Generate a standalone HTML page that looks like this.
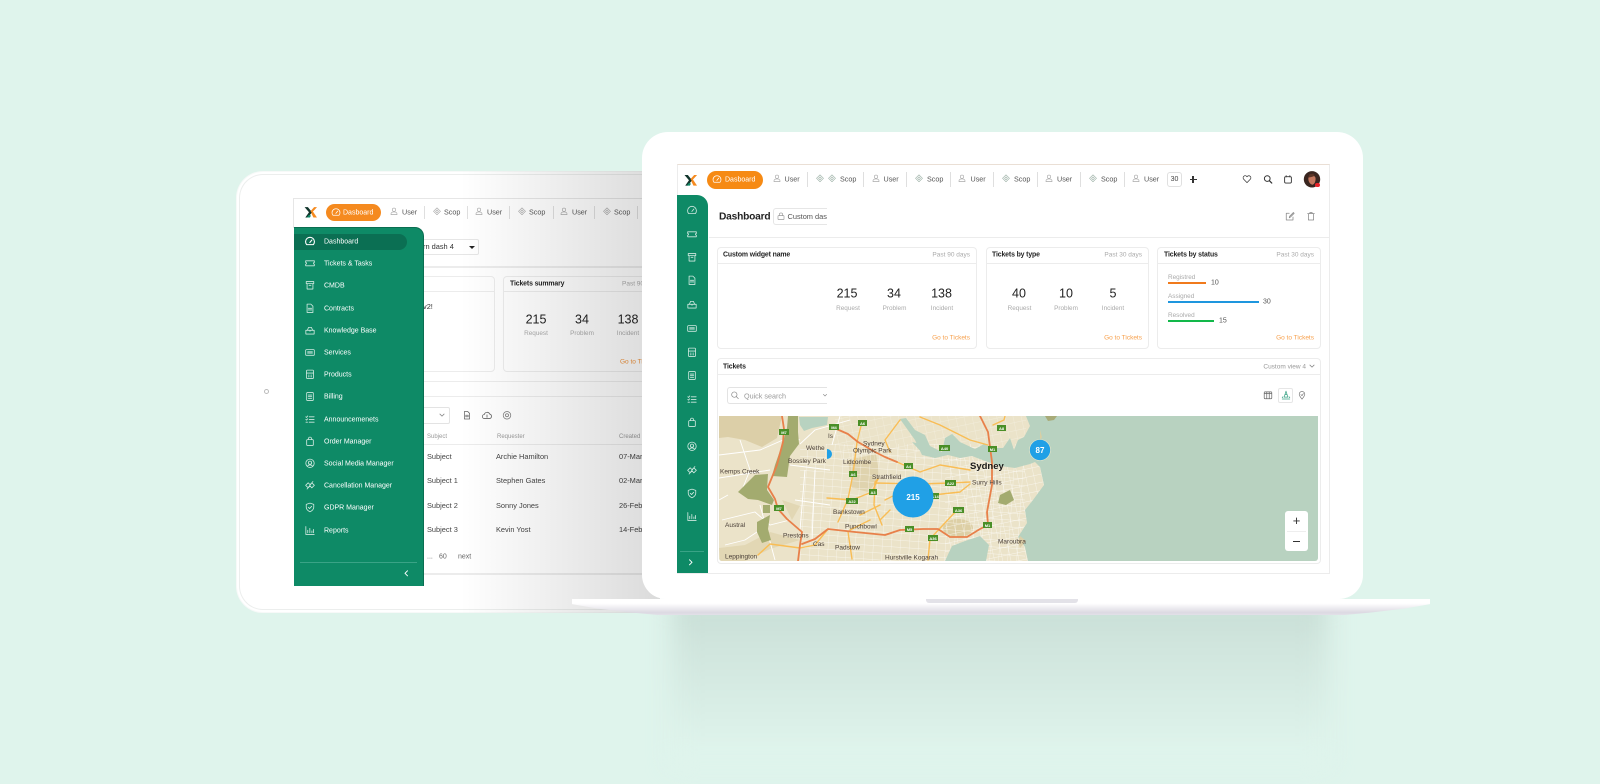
<!DOCTYPE html>
<html><head><meta charset="utf-8"><title>Dashboard</title>
<style>
html,body{margin:0;padding:0}
body{width:1600px;height:784px;position:relative;overflow:hidden;background:#dff4ec;font-family:"Liberation Sans",sans-serif;color:#444}
#w{position:absolute;left:0;top:0;width:1600px;height:784px;filter:blur(.3px)}
.a{position:absolute;box-sizing:border-box}
.t{position:absolute;white-space:nowrap;transform:translateY(calc(-50% + .6px));font-size:7.2px;line-height:1.2;color:#555}
.c{position:absolute;white-space:nowrap;transform:translate(-50%,-50%);line-height:1.2}
.r{position:absolute;white-space:nowrap;transform:translate(-100%,calc(-50% + .6px));line-height:1.2}
.i{position:absolute;fill:none;stroke:currentColor;stroke-width:1;stroke-linecap:round;stroke-linejoin:round;transform:translate(-50%,calc(-50% - .7px));overflow:visible}
.sep{position:absolute;width:1px;background:#dfdfdf}
.card{position:absolute;box-sizing:border-box;border:1px solid #ececec;border-radius:4px;background:#fff}
.ln{position:absolute;height:1px;background:#ececec}
.num{font-size:12.5px;color:#222}
.lab{font-size:6.4px;color:#aaa;margin-top:.7px}
.ttl{font-size:6.9px;color:#222;font-weight:bold;letter-spacing:-.12px}
.past{font-size:6.5px;color:#aaa}
.go{font-size:6.5px;color:#f7a04c}
.side{font-size:7px;color:#fff}
.row{font-size:7.4px;color:#444}
.th{font-size:6px;color:#999}
svg text{font-family:"Liberation Sans",sans-serif}
</style></head>
<body>
<svg width="0" height="0" style="position:absolute">
<symbol id="user" viewBox="0 0 12 12"><circle cx="6" cy="3.6" r="2.5"/><path d="M1.5 11v-1.2c0-2 2-2.9 4.5-2.9s4.5.9 4.5 2.900V11z"/></symbol>
<symbol id="scop" viewBox="0 0 12 12"><path d="M6 .8 11.200 6 6 11.200 .8 6z"/><path d="M6 3.800 8.200 6 6 8.200 3.800 6z"/></symbol>
<symbol id="gauge" viewBox="0 0 12 12"><path d="M2 10a5.300 5.300 0 1 1 8 0z"/><path d="M5.800 7.400 8.300 4.400"/></symbol>
<symbol id="ticket" viewBox="0 0 12 12"><path d="M.8 3h10.400v2a1 1 0 0 0 0 2v2H.8V7a1 1 0 0 0 0-2z"/></symbol>
<symbol id="box" viewBox="0 0 12 12"><path d="M1.500 1.500h9v2.500h-9zM2.500 4v6.500h7V4M4.800 6h2.400"/></symbol>
<symbol id="doc" viewBox="0 0 12 12"><path d="M2.500 1h4.500l2.500 2.500V11h-7zM4 6h4M4 8h4"/></symbol>
<symbol id="kb" viewBox="0 0 12 12"><path d="M1 6h10v4.500H1zM2.800 6 4.300 2.500h3.400L9.200 6M6 6v1.300"/></symbol>
<symbol id="serv" viewBox="0 0 12 12"><rect x=".8" y="2.800" width="10.400" height="6.800" rx="1"/><path d="M3 6.200h6M3 4.800h6M3 7.600h6" stroke-width=".7"/></symbol>
<symbol id="prod" viewBox="0 0 12 12"><rect x="1.800" y="1" width="8.400" height="10" rx="1"/><path d="M1.800 4.500h8.400M4 7h1M7 7h1M4 9h1M7 9h1"/></symbol>
<symbol id="bill" viewBox="0 0 12 12"><rect x="2" y="1.500" width="8" height="9.500" rx=".8"/><path d="M4 4.500h4M4 6.500h4M4 8.500h4"/></symbol>
<symbol id="ann" viewBox="0 0 12 12"><path d="M1 3l.8.800L3.200 2M5 3h6M1 6.200l.8.800 1.400-1.600M5 6.300h6M1.200 9.500h1.800M5 9.500h6"/></symbol>
<symbol id="bag" viewBox="0 0 12 12"><rect x="2" y="4" width="8" height="7" rx="1"/><path d="M4 4V3a2 2 0 0 1 4 0v1"/></symbol>
<symbol id="soc" viewBox="0 0 12 12"><circle cx="6" cy="6" r="5"/><circle cx="6" cy="5.300" r="1.900"/><path d="M3 9.500c1-2 5-2 6 0"/></symbol>
<symbol id="canc" viewBox="0 0 12 12"><path d="M.8 6 3.800 3 6 5.200 8.200 3l3 3-3 3L6 6.800 3.800 9zM2.500 10.500l7-9"/></symbol>
<symbol id="gdpr" viewBox="0 0 12 12"><path d="M6 1l4.500 1.500V6c0 3-2.500 4.500-4.500 5.500C4 10.500 1.500 9 1.500 6V2.500z"/><path d="M4 6l1.500 1.500L8 4.800"/></symbol>
<symbol id="rep" viewBox="0 0 12 12"><path d="M1 1.500V11h10M3.300 9V6M5.800 9V3.800M8.300 9V6.800M10.300 9V5"/></symbol>
<symbol id="logo" viewBox="0 0 14 12"><path d="M0 .3h3.600L8.200 6 3.600 11.700H.8L4.800 6z" fill="#12352c" stroke="none"/><path d="M13.600.3h-3.200L6.400 4.800 8 6.400z" fill="#f58a1f" stroke="none"/><path d="M7.200 6.800 9.600 11.700h3.900L9 5z" fill="#f58a1f" stroke="none"/><path d="M4.500 9 2.400 11.700h3.400L7 9.500z" fill="#0e8a66" stroke="none"/></symbol>
</svg>
<div id="w">

<!-- TABLET -->
<div class="a" style="left:236px;top:171px;width:440px;height:442px;border-radius:27px 0 0 27px;background:#fff;border:1px solid #f7f9f8;border-right:0"></div>
<div class="a" style="left:239px;top:174px;width:437px;height:436px;border-radius:24px 0 0 24px;border:1px solid #eceeed;border-right:0"></div>
<div class="a" style="left:266px;top:391px;width:5px;height:5px;margin:-2.500px;border-radius:50%;border:1px solid #bbb"></div>
<div class="a" style="left:293px;top:198px;width:360px;height:1px;background:#e6e6e6"></div>
<div class="a" style="left:293px;top:198px;width:1px;height:30px;background:#e6e6e6"></div>

<svg class="i" style="left:311px;top:213px;color:#000" width="13" height="11"><use href="#logo"/></svg>
<div class="a" style="left:326px;top:204px;width:55px;height:17px;border-radius:9px;background:#f58a1f"></div>
<svg class="i" style="left:336px;top:212.500px;color:#fff" width="9" height="9"><use href="#gauge"/></svg>
<div class="t" style="left:343px;top:212.500px;color:#fff;font-size:7px">Dasboard</div>

<svg class="i" style="left:394px;top:212px;color:#aaa" width="8" height="8"><use href="#user"/></svg><div class="t" style="left:402px;top:212px">User</div>
<div class="sep" style="left:424px;top:206px;height:13px"></div>
<svg class="i" style="left:437px;top:212px;color:#aaa" width="8" height="8"><use href="#scop"/></svg><div class="t" style="left:444px;top:212px">Scop</div>
<div class="sep" style="left:467px;top:206px;height:13px"></div>
<svg class="i" style="left:479px;top:212px;color:#aaa" width="8" height="8"><use href="#user"/></svg><div class="t" style="left:487px;top:212px">User</div>
<div class="sep" style="left:509px;top:206px;height:13px"></div>
<svg class="i" style="left:522px;top:212px;color:#aaa" width="8" height="8"><use href="#scop"/></svg><div class="t" style="left:529px;top:212px">Scop</div>
<div class="sep" style="left:553px;top:206px;height:13px"></div>
<svg class="i" style="left:564px;top:212px;color:#aaa" width="8" height="8"><use href="#user"/></svg><div class="t" style="left:572px;top:212px">User</div>
<div class="sep" style="left:594px;top:206px;height:13px"></div>
<svg class="i" style="left:607px;top:212px;color:#aaa" width="8" height="8"><use href="#scop"/></svg><div class="t" style="left:614px;top:212px">Scop</div>
<div class="sep" style="left:637px;top:206px;height:13px"></div>

<div class="a" style="left:420px;top:239px;width:59px;height:16px;border:1px solid #e6e6e6;border-radius:2px"></div>
<div class="t" style="left:423px;top:247px;color:#333;font-size:7.400px">rn dash 4</div>
<div class="a" style="left:469px;top:246px;border-left:3px solid transparent;border-right:3px solid transparent;border-top:3.500px solid #222"></div>
<div class="ln" style="left:420px;top:266px;width:240px;height:2px"></div>

<div class="card" style="left:400px;top:276px;width:95px;height:96px"></div>
<div class="ln" style="left:400px;top:291px;width:95px"></div>
<div class="t" style="left:423px;top:307px;color:#333;font-size:7.400px">v2!</div>
<div class="card" style="left:503px;top:276px;width:170px;height:96px;background:#fff"></div>
<div class="ln" style="left:503px;top:291px;width:170px"></div>
<div class="t ttl" style="left:510px;top:283.500px">Tickets summary</div>
<div class="t past" style="left:622px;top:283.500px">Past 90 days</div>
<div class="c num" style="left:536px;top:320px">215</div><div class="c num" style="left:582px;top:320px">34</div><div class="c num" style="left:628px;top:320px">138</div>
<div class="c lab" style="left:536px;top:333px">Request</div><div class="c lab" style="left:582px;top:333px">Problem</div><div class="c lab" style="left:628px;top:333px">Incident</div>
<div class="t go" style="left:620px;top:362px;color:#f0923a">Go to Tickets</div>
<div class="ln" style="left:420px;top:381px;width:240px"></div>
<div class="ln" style="left:420px;top:396px;width:240px"></div>

<div class="a" style="left:400px;top:407px;width:50px;height:17px;border:1px solid #e3e3e3;border-radius:2px"></div>
<svg class="i" style="left:442px;top:416px;color:#888" width="5" height="4" viewBox="0 0 6 4"><path d="M.5.500 3 3 5.500.500"/></svg>
<svg class="i" style="left:467px;top:416px;color:#666" width="9" height="9"><use href="#doc"/></svg>
<svg class="i" style="left:487px;top:416px;color:#666" width="10" height="9" viewBox="0 0 12 11"><path d="M3 9.500a2.500 2.500 0 0 1-.3-5A3.500 3.500 0 0 1 9.300 4a2.800 2.800 0 0 1-.3 5.500zM6 5v3"/></svg>
<svg class="i" style="left:507px;top:416px;color:#777" width="9" height="9" viewBox="0 0 12 12"><circle cx="6" cy="6" r="5" stroke-dasharray="2 .6"/><circle cx="6" cy="6" r="2"/></svg>

<div class="t th" style="left:427px;top:437px">Subject</div><div class="t th" style="left:497px;top:437px">Requester</div><div class="t th" style="left:619px;top:437px">Created date</div>
<div class="ln" style="left:420px;top:444px;width:240px"></div>
<div class="t row" style="left:427px;top:457px">Subject</div><div class="t row" style="left:496px;top:457px">Archie Hamilton</div><div class="t row" style="left:619px;top:457px">07-Mar-2021</div>
<div class="t row" style="left:427px;top:481px">Subject 1</div><div class="t row" style="left:496px;top:481px">Stephen Gates</div><div class="t row" style="left:619px;top:481px">02-Mar-2021</div>
<div class="t row" style="left:427px;top:505.500px">Subject 2</div><div class="t row" style="left:496px;top:505.500px">Sonny Jones</div><div class="t row" style="left:619px;top:505.500px">26-Feb-2021</div>
<div class="t row" style="left:427px;top:529.500px">Subject 3</div><div class="t row" style="left:496px;top:529.500px">Kevin Yost</div><div class="t row" style="left:619px;top:529.500px">14-Feb-2021</div>
<div class="t th" style="left:427px;top:557px;font-size:7px;color:#666">...</div><div class="t th" style="left:439px;top:557px;font-size:7px;color:#666">60</div><div class="t th" style="left:458px;top:557px;font-size:7px;color:#666">next</div>
<div class="ln" style="left:420px;top:573px;width:240px;height:2px"></div>

<!-- tablet gray fade -->
<div class="a" style="left:460px;top:171px;width:200px;height:442px;background:linear-gradient(90deg,rgba(0,0,0,0) 0,rgba(0,0,0,.12) 85%,rgba(0,0,0,.14) 100%)"></div>

<!-- sidebar -->
<div class="a" style="left:294px;top:227px;width:130px;height:359px;background:#0e8a66;border-radius:0 9px 0 0;border-right:1px solid #0a6e51;border-top:1px solid #0a6e51"></div>
<div class="a" style="left:294px;top:234px;width:113px;height:16px;background:#0b6f53;border-radius:0 8px 8px 0"></div>
<svg class="i" style="left:310px;top:242px;color:#fff;stroke-width:1.300" width="10" height="10"><use href="#gauge"/></svg><div class="t side" style="left:324px;top:242px">Dashboard</div>
<svg class="i" style="left:310px;top:264px;color:#cfe8df" width="10" height="10"><use href="#ticket"/></svg><div class="t side" style="left:324px;top:264px">Tickets &amp; Tasks</div>
<svg class="i" style="left:310px;top:286px;color:#cfe8df" width="10" height="10"><use href="#box"/></svg><div class="t side" style="left:324px;top:286px">CMDB</div>
<svg class="i" style="left:310px;top:308.500px;color:#cfe8df" width="10" height="10"><use href="#doc"/></svg><div class="t side" style="left:324px;top:308.500px">Contracts</div>
<svg class="i" style="left:310px;top:330.700px;color:#cfe8df" width="10" height="10"><use href="#kb"/></svg><div class="t side" style="left:324px;top:330.700px">Knowledge Base</div>
<svg class="i" style="left:310px;top:353px;color:#cfe8df" width="10" height="10"><use href="#serv"/></svg><div class="t side" style="left:324px;top:353px">Services</div>
<svg class="i" style="left:310px;top:375px;color:#cfe8df" width="10" height="10"><use href="#prod"/></svg><div class="t side" style="left:324px;top:375px">Products</div>
<svg class="i" style="left:310px;top:397px;color:#cfe8df" width="10" height="10"><use href="#bill"/></svg><div class="t side" style="left:324px;top:397px">Billing</div>
<svg class="i" style="left:310px;top:419.500px;color:#cfe8df" width="10" height="10"><use href="#ann"/></svg><div class="t side" style="left:324px;top:419.500px">Announcemenets</div>
<svg class="i" style="left:310px;top:442px;color:#cfe8df" width="10" height="10"><use href="#bag"/></svg><div class="t side" style="left:324px;top:442px">Order Manager</div>
<svg class="i" style="left:310px;top:464px;color:#cfe8df" width="10" height="10"><use href="#soc"/></svg><div class="t side" style="left:324px;top:464px">Social Media Manager</div>
<svg class="i" style="left:310px;top:486px;color:#cfe8df" width="10" height="10"><use href="#canc"/></svg><div class="t side" style="left:324px;top:486px">Cancellation Manager</div>
<svg class="i" style="left:310px;top:508px;color:#cfe8df" width="10" height="10"><use href="#gdpr"/></svg><div class="t side" style="left:324px;top:508px">GDPR Manager</div>
<svg class="i" style="left:310px;top:530.700px;color:#cfe8df" width="10" height="10"><use href="#rep"/></svg><div class="t side" style="left:324px;top:530.700px">Reports</div>
<div class="a" style="left:300px;top:561.500px;width:117px;height:1px;background:#3aa386"></div>
<svg class="i" style="left:406px;top:574px;color:#fff" width="4" height="6" viewBox="0 0 4 6"><path d="M3.500.500 1 3l2.500 2.500"/></svg>

<!-- LAPTOP shadow & base -->
<div class="a" style="left:672px;top:600px;width:656px;height:165px;background:linear-gradient(#c2d9d0 0,#cde2da 15%,#dff4ec 92%);filter:blur(12px)"></div>
<div class="a" style="left:572px;top:599px;width:858px;height:16px;background:linear-gradient(#fff 0,#fff 28%,#f4f3f6 45%,#dcd9e2 85%,#e2e0e8 100%);clip-path:polygon(0 0,100% 0,100% 32%,97% 60%,93% 85%,90% 100%,10% 100%,7% 85%,3% 60%,0 32%)"></div>
<div class="a" style="left:642px;top:132px;width:721px;height:467px;background:#fff;border-radius:26px 26px 24px 24px"></div>
<div class="a" style="left:926px;top:599px;width:152px;height:4px;background:#e3e2e8;border-radius:0 0 3px 3px"></div>

<!-- Laptop screen -->
<div class="a" style="left:677px;top:164px;width:653px;height:410px;border:1px solid #ececec;border-top-color:#eadfd5;background:#fff"></div>

<svg class="i" style="left:691px;top:180.500px" width="13" height="11.500"><use href="#logo"/></svg>
<div class="a" style="left:707px;top:171px;width:56px;height:18px;border-radius:9px;background:#f68a14"></div>
<svg class="i" style="left:717px;top:180px;color:#fff" width="9" height="9"><use href="#gauge"/></svg>
<div class="t" style="left:725px;top:180px;color:#fff;font-size:7px">Dasboard</div>

<svg class="i" style="left:777px;top:179px;color:#aaa" width="8" height="8"><use href="#user"/></svg><div class="t" style="left:784.500px;top:179px">User</div>
<div class="sep" style="left:807px;top:172px;height:15px"></div>
<svg class="i" style="left:820px;top:179px;color:#9fb3a9" width="8" height="8"><use href="#scop"/></svg><svg class="i" style="left:832px;top:179px;color:#9fb3a9" width="8" height="8"><use href="#scop"/></svg><div class="t" style="left:840px;top:179px">Scop</div>
<div class="sep" style="left:863px;top:172px;height:15px"></div>
<svg class="i" style="left:876px;top:179px;color:#aaa" width="8" height="8"><use href="#user"/></svg><div class="t" style="left:883.500px;top:179px">User</div>
<div class="sep" style="left:906px;top:172px;height:15px"></div>
<svg class="i" style="left:919px;top:179px;color:#9fb3a9" width="8" height="8"><use href="#scop"/></svg><div class="t" style="left:927px;top:179px">Scop</div>
<div class="sep" style="left:950px;top:172px;height:15px"></div>
<svg class="i" style="left:962px;top:179px;color:#aaa" width="8" height="8"><use href="#user"/></svg><div class="t" style="left:970.500px;top:179px">User</div>
<div class="sep" style="left:993px;top:172px;height:15px"></div>
<svg class="i" style="left:1006px;top:179px;color:#9fb3a9" width="8" height="8"><use href="#scop"/></svg><div class="t" style="left:1014px;top:179px">Scop</div>
<div class="sep" style="left:1037px;top:172px;height:15px"></div>
<svg class="i" style="left:1049px;top:179px;color:#aaa" width="8" height="8"><use href="#user"/></svg><div class="t" style="left:1057px;top:179px">User</div>
<div class="sep" style="left:1080px;top:172px;height:15px"></div>
<svg class="i" style="left:1093px;top:179px;color:#9fb3a9" width="8" height="8"><use href="#scop"/></svg><div class="t" style="left:1101px;top:179px">Scop</div>
<div class="sep" style="left:1124px;top:172px;height:15px"></div>
<svg class="i" style="left:1136px;top:179px;color:#aaa" width="8" height="8"><use href="#user"/></svg><div class="t" style="left:1144px;top:179px">User</div>
<div class="a" style="left:1167px;top:172px;width:15px;height:15px;border:1px solid #e0e0e0;border-radius:3px"></div>
<div class="c" style="left:1174.500px;top:179.500px;font-size:7px;color:#444">30</div>
<div class="a" style="left:1189.500px;top:178.500px;width:7px;height:1.300px;background:#333"></div><div class="a" style="left:1192.400px;top:175.600px;width:1.300px;height:7px;background:#333"></div>
<svg class="i" style="left:1247px;top:179.500px;color:#333" width="9" height="8" viewBox="0 0 12 11"><path d="M6 10 1.500 5.500a2.800 2.800 0 0 1 4-4L6 2l.5-.5a2.800 2.800 0 0 1 4 4z"/></svg>
<svg class="i" style="left:1267.500px;top:179.500px;color:#333" width="9" height="9" viewBox="0 0 12 12"><circle cx="5" cy="5" r="3.800" stroke-width="1.300"/><path d="M8 8l3 3" stroke-width="1.600"/></svg>
<svg class="i" style="left:1288px;top:179.500px;color:#333" width="9" height="9" viewBox="0 0 12 12"><rect x="1.500" y="2.500" width="9" height="8.500" rx="1.500" stroke-width="1.200"/><path d="M3.500 1v2M8.500 1v2"/></svg>
<svg class="i" style="left:1312px;top:179.500px" width="17" height="17" viewBox="0 0 17 17"><circle cx="8.500" cy="8.500" r="8.200" fill="#3a2620" stroke="none"/><path d="M5 6.500c1-2.500 6-2.800 7 .5.400 3-.8 6.500-3 7-2.300-.2-4.800-3.500-4-7.500z" fill="#c5785f" stroke="none"/><path d="M4.500 7c1.500-.5 5-.8 6.500-2L10 3 6 3.500z" fill="#5a3426" stroke="none"/></svg>
<div class="a" style="left:1315px;top:182.500px;width:4.500px;height:4.500px;border-radius:50%;background:#e8232a"></div>

<!-- Rail -->
<div class="a" style="left:677px;top:195px;width:31px;height:378px;background:#0e8a66;border-radius:0 11px 0 0"></div>
<svg class="i" style="left:691.500px;top:211px;color:#cfe8df" width="10" height="10"><use href="#gauge"/></svg>
<svg class="i" style="left:691.500px;top:235px;color:#cfe8df" width="10" height="10"><use href="#ticket"/></svg>
<svg class="i" style="left:691.500px;top:258px;color:#cfe8df" width="10" height="10"><use href="#box"/></svg>
<svg class="i" style="left:691.500px;top:281px;color:#cfe8df" width="10" height="10"><use href="#doc"/></svg>
<svg class="i" style="left:691.500px;top:305px;color:#cfe8df" width="10" height="10"><use href="#kb"/></svg>
<svg class="i" style="left:691.500px;top:329px;color:#cfe8df" width="10" height="10"><use href="#serv"/></svg>
<svg class="i" style="left:691.500px;top:352.500px;color:#cfe8df" width="10" height="10"><use href="#prod"/></svg>
<svg class="i" style="left:691.500px;top:376px;color:#cfe8df" width="10" height="10"><use href="#bill"/></svg>
<svg class="i" style="left:691.500px;top:400px;color:#cfe8df" width="10" height="10"><use href="#ann"/></svg>
<svg class="i" style="left:691.500px;top:423px;color:#cfe8df" width="10" height="10"><use href="#bag"/></svg>
<svg class="i" style="left:691.500px;top:447px;color:#cfe8df" width="10" height="10"><use href="#soc"/></svg>
<svg class="i" style="left:691.500px;top:470.500px;color:#cfe8df" width="10" height="10"><use href="#canc"/></svg>
<svg class="i" style="left:691.500px;top:494px;color:#cfe8df" width="10" height="10"><use href="#gdpr"/></svg>
<svg class="i" style="left:691.500px;top:517px;color:#cfe8df" width="10" height="10"><use href="#rep"/></svg>
<div class="a" style="left:680px;top:550.500px;width:24px;height:1px;background:#3aa386"></div>
<svg class="i" style="left:691px;top:563px;color:#fff" width="4" height="6" viewBox="0 0 4 6"><path d="M.5.500 3 3 .5 5.500"/></svg>

<!-- Header -->
<div class="t" style="left:719px;top:217px;font-size:10.200px;font-weight:bold;color:#222;letter-spacing:-.2px">Dashboard</div>
<div class="a" style="left:773px;top:208px;width:54px;height:17px;border:1px solid #e6e6e6;border-right:0;border-radius:3px 0 0 3px;overflow:hidden;background:#fff">
<div class="t" style="left:13.500px;top:7.500px;font-size:7.400px;color:#555">Custom dashboard</div></div>
<svg class="i" style="left:780.500px;top:216.500px;color:#999" width="8" height="8" viewBox="0 0 12 12"><rect x="1.500" y="5" width="9" height="6" rx="1"/><path d="M3.500 5V3.500a2.500 2.500 0 0 1 5 0V5"/></svg>
<svg class="i" style="left:1290px;top:216.500px;color:#888" width="9" height="9" viewBox="0 0 12 12"><path d="M10 7v4H1V2h4M5 8l.5-2L10.500 1l1 1-5 5z"/></svg>
<svg class="i" style="left:1311px;top:216.500px;color:#888" width="8" height="9" viewBox="0 0 10 12"><path d="M1.500 2.500V11h7V2.500zM.5 2.500h9M3.500 2.500V1h3v1.500"/></svg>
<div class="ln" style="left:709px;top:237px;width:620px"></div>

<!-- Card 1 -->
<div class="card" style="left:717px;top:247px;width:260px;height:102px"></div>
<div class="ln" style="left:717px;top:263px;width:260px"></div>
<div class="t ttl" style="left:723px;top:255px">Custom widget name</div>
<div class="r past" style="left:970px;top:255px">Past 90 days</div>
<div class="c num" style="left:847px;top:294px">215</div><div class="c num" style="left:894px;top:294px">34</div><div class="c num" style="left:941.500px;top:294px">138</div>
<div class="c lab" style="left:848px;top:308px">Request</div><div class="c lab" style="left:894.500px;top:308px">Problem</div><div class="c lab" style="left:942px;top:308px">Incident</div>
<div class="r go" style="left:970px;top:338px">Go to Tickets</div>
<!-- Card 2 -->
<div class="card" style="left:986px;top:247px;width:163px;height:102px"></div>
<div class="ln" style="left:986px;top:263px;width:163px"></div>
<div class="t ttl" style="left:992px;top:255px">Tickets by type</div>
<div class="r past" style="left:1142px;top:255px">Past 30 days</div>
<div class="c num" style="left:1019px;top:294px">40</div><div class="c num" style="left:1066px;top:294px">10</div><div class="c num" style="left:1113px;top:294px">5</div>
<div class="c lab" style="left:1019.500px;top:308px">Request</div><div class="c lab" style="left:1066px;top:308px">Problem</div><div class="c lab" style="left:1113px;top:308px">Incident</div>
<div class="r go" style="left:1142px;top:338px">Go to Tickets</div>
<!-- Card 3 -->
<div class="card" style="left:1157px;top:247px;width:164px;height:102px"></div>
<div class="ln" style="left:1157px;top:263px;width:164px"></div>
<div class="t ttl" style="left:1164px;top:255px">Tickets by status</div>
<div class="r past" style="left:1314px;top:255px">Past 30 days</div>
<div class="t lab" style="left:1168px;top:276px">Registred</div>
<div class="a" style="left:1168px;top:282px;width:38px;height:2px;background:#f07a1c"></div><div class="t" style="left:1211px;top:283px;font-size:7px">10</div>
<div class="t lab" style="left:1168px;top:295px">Assigned</div>
<div class="a" style="left:1168px;top:301px;width:91px;height:2px;background:#1e96de"></div><div class="t" style="left:1263px;top:302px;font-size:7px">30</div>
<div class="t lab" style="left:1168px;top:314px">Resolved</div>
<div class="a" style="left:1168px;top:320px;width:46px;height:2px;background:#12b84a"></div><div class="t" style="left:1219px;top:321px;font-size:7px">15</div>
<div class="r go" style="left:1314px;top:338px">Go to Tickets</div>

<!-- Tickets card -->
<div class="card" style="left:717px;top:358px;width:604px;height:206px"></div>
<div class="ln" style="left:717px;top:374px;width:604px"></div>
<div class="t ttl" style="left:723px;top:366.500px">Tickets</div>
<div class="r past" style="left:1306px;top:366.500px;color:#999">Custom view 4</div>
<svg class="i" style="left:1312px;top:367px;color:#888" width="5" height="4" viewBox="0 0 6 4"><path d="M.5.500 3 3 5.500.500"/></svg>
<div class="a" style="left:727px;top:387px;width:100px;height:17px;border:1px solid #e3e3e3;border-right:0;border-radius:3px 0 0 3px;overflow:hidden"></div>
<svg class="i" style="left:735px;top:395.500px;color:#888" width="8" height="8" viewBox="0 0 12 12"><circle cx="5" cy="5" r="4"/><path d="M8 8l3 3"/></svg>
<div class="t" style="left:744px;top:395.500px;color:#999;font-size:7.200px">Quick search</div>
<svg class="i" style="left:825px;top:395.500px;color:#888" width="4" height="3" viewBox="0 0 6 4"><path d="M.5.500 3 3 5.500.500"/></svg>
<svg class="i" style="left:1268px;top:395.500px;color:#666" width="9" height="8" viewBox="0 0 12 11"><rect x=".8" y=".8" width="10.400" height="9.400" rx="1"/><path d="M4.300 1v9M7.700 1v9M1 3h10"/></svg>
<div class="a" style="left:1278px;top:388px;width:15px;height:15px;border:1px solid #e6e6e6;border-radius:2px"></div>
<svg class="i" style="left:1285.500px;top:395.500px;color:#3aa386" width="9" height="10" viewBox="0 0 12 13"><path d="M6 1 3.500 9h5zM4.500 5.500h3M1 11.500h10M1 9.500l1-1M11 9.500l-1-1"/></svg>
<svg class="i" style="left:1302px;top:395.500px;color:#777" width="7" height="9" viewBox="0 0 10 13"><path d="M5 12C2.500 9 1 7.200 1 5a4 4 0 0 1 8 0c0 2.200-1.500 4-4 7zM3.500 5.500 5 7l2-3"/></svg>

<!-- MAP -->
<svg class="a" style="left:719px;top:416px;border-radius:0 0 3px 3px" width="599" height="145" viewBox="719 416 599 145">
<defs>
<pattern id="g1" width="9" height="7" patternUnits="userSpaceOnUse" patternTransform="rotate(4)"><path d="M0 0H9M0 0V7" stroke="#fff" stroke-width=".65" fill="none"/></pattern>
<pattern id="g2" width="8" height="8" patternUnits="userSpaceOnUse" patternTransform="rotate(-12)"><path d="M0 0H8M0 0V8" stroke="#fff" stroke-width=".65" fill="none"/></pattern>
<clipPath id="cl"><path d="M719 416H1026L1030 426 1024 437 1018 440 1014 450 1010 438 1003 448 992 448 984 444 975 449 960 442 952 434 945 438 942 452 930 446 925 435 915 430 906 418 900 419 915 440 922 455 935 458 948 455 960 458 972 456 985 461 1000 466 1015 468 1030 464 1035 462 1040 467 1044 485 1033 500 1025 510 1027 523 1018 537 1025 547 1028 561H719Z"/></clipPath>
</defs>
<rect x="719" y="416" width="599" height="145" fill="#b8d2c0"/>
<path d="M719 416H1026L1030 426 1024 437 1018 440 1014 450 1010 438 1003 448 992 448 984 444 975 449 960 442 952 434 945 438 942 452 930 446 925 435 915 430 906 418 900 419 915 440 922 455 935 458 948 455 960 458 972 456 985 461 1000 466 1015 468 1030 464 1035 462 1040 467 1044 485 1033 500 1025 510 1027 523 1018 537 1025 547 1028 561H719Z" fill="#ebe3c9"/>
<path d="M1045 416H1057L1054 420 1048 421Z" fill="#a8ab78"/>
<path d="M1040 430 1042 437 1040 441Z" fill="#d8cfa4"/>
<!-- tan -->
<path d="M719 416H782L777 438 762 447 745 440 728 437 719 438Z" fill="#dccfa8"/>
<path d="M800 540 770 549 745 561H720L719 548 745 545 770 532Z" fill="#e2d7b4"/>
<path d="M848 460 876 454 880 478 868 492 852 488Z" fill="#dfd3ae"/>
<path d="M782 500 800 506 792 520Z" fill="#e2d7b4"/>
<ellipse cx="958" cy="528" rx="15" ry="9" fill="#ddcfa5"/>
<!-- streets -->
<path d="M800 444H1025V561H800Z" fill="url(#g1)" opacity=".8" clip-path="url(#cl)"/>
<path d="M835 416H1026V460H835Z" fill="url(#g2)" opacity=".45" clip-path="url(#cl)"/>
<path d="M945 458H1044V561H945Z" fill="url(#g2)" opacity=".85" clip-path="url(#cl)"/>
<path d="M719 455 760 450 790 437 800 440M719 478 770 470M728 495 719 500M722 520 755 512 770 525 790 520M740 440 750 470 742 490M760 505 775 560M725 545 745 540 760 530M800 444 815 430 850 420M840 416 832 445M790 465 830 470M795 500 830 505M805 470 800 530M815 470 812 540" fill="none" stroke="#fff" stroke-width=".9"/>
<!-- water overlays -->
<path d="M799 417H828L827 425 812 428 804 431 800 425Z" fill="#b8d2c0"/>
<path d="M945 561 952 546 965 541 980 536 989 545 986 561Z" fill="#b8d2c0"/>
<path d="M912 442 925 445 936 455 924 455Z" fill="#b8d2c0"/>
<path d="M952 434 958 440 955 448 948 444Z" fill="#b8d2c0"/>
<!-- parks -->
<g fill="#a3ab6f">
<path d="M788 416H798L798 432 799 444 790 456 787 477 772 476 775 465 783 442 787 428Z"/>
<path d="M738 492 755 475 768 474 767 490 774 500 772 505 758 500 748 499Z"/>
<path d="M757 522 770 515 768 529 771 540 762 543 757 532Z"/>
<path d="M763 505H770V513H763Z"/>
<path d="M1000 495 1010 490 1014 500 1006 505 998 503Z"/>
<path d="M1020 536 1026 541 1020 548 1018 542Z" fill="#dccfa8"/>
</g>
<!-- primary roads -->
<g fill="none" stroke="#f9bd55" stroke-width="1.400" stroke-linejoin="round" stroke-linecap="round">
<path d="M862 422 857 442 853 474 848 499 838 522"/>
<path d="M827 498 852 500 872 492 878 479 875 482 874 505 882 525"/>
<path d="M897 462 920 472 940 465 970 470"/>
<path d="M875 483 920 484 950 483 970 482"/>
<path d="M933 495 960 492 970 484"/>
<path d="M958 509 943 525 930 539 928 560"/>
<path d="M758 555 770 544 800 548 815 545 828 529"/>
<path d="M848 532 852 559"/>
<path d="M900 420 885 440 890 452"/>
<path d="M920 417 940 425 970 440 988 445"/>
<path d="M993 425 1004 420 1005 416"/>
<path d="M885 500 905 490M880 520 890 510M880 505 860 515M870 520 850 530"/>
</g>
<!-- motorways -->
<g fill="none" stroke="#e8804a" stroke-width="1.800" stroke-linejoin="round" stroke-linecap="round">
<path d="M782 416 784 429 783 442 777 465 768 487 775 499 778 509 787 519 802 532 800 545 798 561"/>
<path d="M802 544 815 539 828 529 855 532 885 535 900 530 923 529 938 529 950 537 967 537 980 529 988 525 987 512 992 485 992 462 988 432 980 416"/>
<path d="M832 427 848 434 858 442 875 452 885 457 897 462"/>
</g>
<!-- shields -->
<g fill="#4a8f27">
<rect x="779" y="429" width="10" height="6"/><rect x="774" y="505" width="10" height="6"/><rect x="829" y="424" width="10" height="6"/><rect x="858" y="420" width="9" height="6"/>
<rect x="849" y="471" width="8" height="6"/><rect x="846" y="498" width="12" height="6"/><rect x="869" y="489" width="8" height="6"/><rect x="904" y="463" width="9" height="6"/>
<rect x="939" y="445" width="11" height="6"/><rect x="988" y="446" width="9" height="6"/><rect x="997" y="425" width="9" height="6"/><rect x="945" y="480" width="11" height="6"/>
<rect x="953" y="507" width="11" height="6"/><rect x="983" y="522" width="9" height="6"/><rect x="905" y="526" width="9" height="6"/><rect x="928" y="535" width="10" height="6"/><rect x="930" y="493" width="9" height="6"/>
</g>
<g font-size="4" fill="#fff" font-weight="bold" text-anchor="middle">
<text x="784" y="434">M7</text><text x="779" y="510">M7</text><text x="834" y="429">M4</text><text x="862.500" y="425">A6</text><text x="853" y="476">A6</text><text x="852" y="503">A22</text><text x="873" y="494">A3</text><text x="908.500" y="468">A4</text><text x="944.500" y="450">A40</text><text x="992.500" y="451">M1</text><text x="1001.500" y="430">A8</text><text x="950.500" y="485">A22</text><text x="958.500" y="512">A36</text><text x="987.500" y="527">M1</text><text x="909.500" y="531">M5</text><text x="933" y="540">A36</text><text x="935" y="498">A14</text>
</g>
<!-- labels -->
<g font-size="6.500" fill="#4a3f38">
<text x="806" y="450">Wethe</text><text x="788" y="463">Bossley Park</text><text x="720" y="473.500">Kemps Creek</text><text x="725" y="527">Austral</text><text x="783" y="537.500">Prestons</text><text x="725" y="558.500">Leppington</text><text x="813" y="546">Cas</text><text x="843" y="464">Lidcombe</text><text x="863" y="445.500">Sydney</text><text x="853" y="452.500">Olympic Park</text><text x="872" y="479">Strathfield</text><text x="833" y="514">Bankstown</text><text x="845" y="528.500">Punchbowl</text><text x="835" y="549.500">Padstow</text><text x="885" y="559.500">Hurstville Kogarah</text><text x="972" y="484.500">Surry Hills</text><text x="998" y="543.500">Maroubra</text><text x="828" y="438">Is</text>
</g>
<text x="970" y="469" font-size="9.500" font-weight="bold" fill="#1a1a1a">Sydney</text>
<!-- clusters -->
<circle cx="913" cy="497" r="20.500" fill="#20a0e6"/>
<circle cx="1040" cy="450" r="10.500" fill="#20a0e6" stroke="#e9e7c9" stroke-width=".6"/>
<path d="M827 449a5 5 0 0 1 0 10z" fill="#20a0e6"/>
<text x="913" y="500" font-size="8" font-weight="bold" fill="#fff" text-anchor="middle">215</text>
<text x="1040" y="453" font-size="8" font-weight="bold" fill="#fff" text-anchor="middle">87</text>
</svg>
<div class="a" style="left:1285px;top:511px;width:23px;height:40px;background:#fff;border-radius:3px"></div>
<div class="a" style="left:1287px;top:531px;width:19px;height:1px;background:#eee"></div>
<div class="c" style="left:1296.500px;top:521px;font-size:13px;color:#333">+</div>
<div class="a" style="left:1293px;top:540.500px;width:7px;height:1.300px;background:#333"></div>
</div>
</body></html>
